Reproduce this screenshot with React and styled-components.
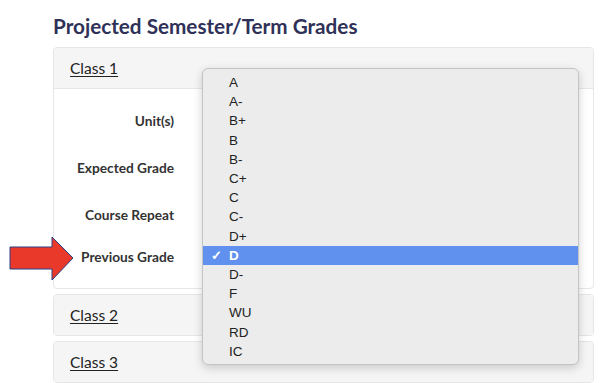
import React from "react";
import styled, { createGlobalStyle } from "styled-components";

const GlobalStyle = createGlobalStyle`
  html, body {
    margin: 0;
    padding: 0;
    background: #ffffff;
    font-family: Lato, "Open Sans", sans-serif;
    overflow: hidden;
  }
`;

const grades = ["A", "A-", "B+", "B", "B-", "C+", "C", "C-", "D+", "D", "D-", "F", "WU", "RD", "IC"];

export default function App() {
    return (
        <Page>
            <GlobalStyle />
            <Title>Projected Semester/Term Grades</Title>
            <Panel>
                <PanelHead>
                    <ClassLink>Class 1</ClassLink>
                </PanelHead>
                <PanelBody>
                    <FormRow $space={13}>
                        <Label>Unit(s)</Label>
                        <Field />
                    </FormRow>
                    <FormRow $space={13}>
                        <Label>Expected Grade</Label>
                        <Field />
                    </FormRow>
                    <FormRow $space={8}>
                        <Label>Course Repeat</Label>
                        <div />
                    </FormRow>
                    <FormRow>
                        <Label>Previous Grade</Label>
                        <Field $focus />
                    </FormRow>
                </PanelBody>
            </Panel>
            <Panel>
                <PanelHead $closed>
                    <ClassLink>Class 2</ClassLink>
                </PanelHead>
            </Panel>
            <Panel>
                <PanelHead $closed>
                    <ClassLink>Class 3</ClassLink>
                </PanelHead>
            </Panel>

            {/* annotation arrow */}
            <Arrow viewBox="0 0 66 46" width="66" height="46">
                <polygon
                    points="1,11 43,11 43,1 64,22 43,44 43,33 1,33"
                    fill="#e8392a"
                    stroke="#2b3f86"
                    strokeWidth="1"
                />
            </Arrow>

            {/* open native select menu */}
            <Menu>
                {grades.map((g) => (
                    <MenuItem key={g} $active={g === "D"}>
                        <Check>{g === "D" ? "✓" : ""}</Check>
                        {g}
                    </MenuItem>
                ))}
            </Menu>
        </Page>
    );
}

const Page = styled.div`
    position: relative;
    width: 600px;
    height: 383px;
    box-sizing: border-box;
    padding: 14px 6px 0 53px;
`;

const Title = styled.h1`
    margin: 0 0 9px 0;
    font-family: Lato, sans-serif;
    font-weight: 700;
    font-size: 20.7px;
    line-height: 24px;
    color: #2f3158;
`;

const Panel = styled.div`
    border: 1px solid #e6e6e6;
    border-radius: 4px;
    background: #ffffff;
    margin-bottom: 5px;
    overflow: hidden;
`;

const PanelHead = styled.div`
    display: flex;
    align-items: center;
    height: 40px;
    padding: 0 16px;
    background: #f5f5f5;
    border-bottom: ${(p) => (p.$closed ? "none" : "1px solid #e6e6e6")};
`;

const ClassLink = styled.span`
    font-family: Lato, sans-serif;
    font-size: 15.5px;
    color: #222;
    text-decoration: underline;
    text-underline-offset: 2px;
`;

const PanelBody = styled.div`
    display: flex;
    flex-direction: column;
    padding: 14px 14px 15px 0;
`;

const FormRow = styled.div`
    display: grid;
    grid-template-columns: 120px 1fr;
    column-gap: 32px;
    align-items: center;
    height: 34px;
    margin-bottom: ${(p) => p.$space || 0}px;
`;

const Label = styled.div`
    text-align: right;
    font-family: Lato, sans-serif;
    font-weight: 700;
    font-size: 13.7px;
    color: #333;
`;

const Field = styled.div`
    height: 32px;
    border: 1px solid ${(p) => (p.$focus ? "#7aa6e6" : "#cccccc")};
    border-radius: 4px;
    background: #fff;
`;

const Arrow = styled.svg`
    position: absolute;
    left: 9px;
    top: 236px;
    display: block;
`;

const Menu = styled.div`
    position: absolute;
    left: 202px;
    top: 68px;
    width: 377px;
    height: 297px;
    box-sizing: border-box;
    padding: 4px 0;
    background: #ececec;
    border: 1px solid #c4c4c4;
    border-radius: 6px;
    box-shadow: 0 3px 10px rgba(0, 0, 0, 0.18);
    font-family: "Liberation Sans", Arial, sans-serif;
    font-size: 13.5px;
    color: #222;
`;

const MenuItem = styled.div`
    display: flex;
    align-items: center;
    height: 19.2px;
    padding-left: 8px;
    background: ${(p) => (p.$active ? "#6191ee" : "transparent")};
    color: ${(p) => (p.$active ? "#ffffff" : "#222")};
    font-weight: ${(p) => (p.$active ? 700 : 400)};
`;

const Check = styled.span`
    display: inline-block;
    width: 18px;
    font-size: 13px;
`;
